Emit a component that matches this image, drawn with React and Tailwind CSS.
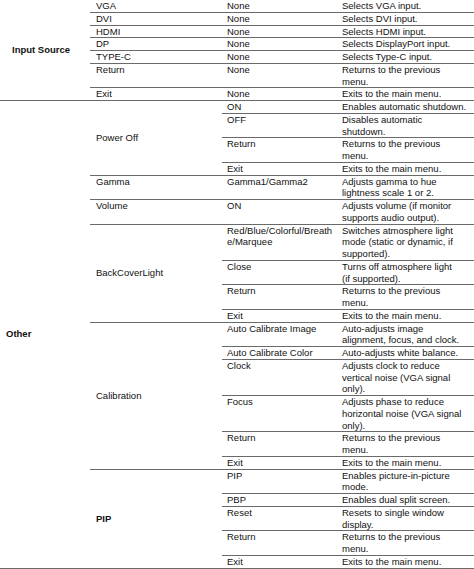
import * as React from "react"

const sections = [
	{
		name: "Input Source",
		pad: "pl-[12px]",
		groups: [
			{ item: "VGA", opts: [{ v: ["None"], d: ["Selects VGA input."] }] },
			{ item: "DVI", opts: [{ v: ["None"], d: ["Selects DVI input."] }] },
			{ item: "HDMI", opts: [{ v: ["None"], d: ["Selects HDMI input."] }] },
			{ item: "DP", opts: [{ v: ["None"], d: ["Selects DisplayPort input."] }] },
			{ item: "TYPE-C", opts: [{ v: ["None"], d: ["Selects Type-C input."] }] },
			{ item: "Return", opts: [{ v: ["None"], d: ["Returns to the previous", "menu."] }] },
			{ item: "Exit", opts: [{ v: ["None"], d: ["Exits to the main menu."] }] },
		],
	},
	{
		name: "Other",
		pad: "pl-[6px]",
		groups: [
			{
				item: "Power Off",
				opts: [
					{ v: ["ON"], d: ["Enables automatic shutdown."] },
					{ v: ["OFF"], d: ["Disables automatic", "shutdown."] },
					{ v: ["Return"], d: ["Returns to the previous", "menu."] },
					{ v: ["Exit"], d: ["Exits to the main menu."] },
				],
			},
			{ item: "Gamma", opts: [{ v: ["Gamma1/Gamma2"], d: ["Adjusts gamma to hue", "lightness scale 1 or 2."] }] },
			{ item: "Volume", opts: [{ v: ["ON"], d: ["Adjusts volume (if monitor", "supports audio output)."] }] },
			{
				item: "BackCoverLight",
				opts: [
					{ v: ["Red/Blue/Colorful/Breath", "e/Marquee"], d: ["Switches atmosphere light", "mode (static or dynamic, if", "supported)."] },
					{ v: ["Close"], d: ["Turns off atmosphere light", "(if supported)."] },
					{ v: ["Return"], d: ["Returns to the previous", "menu."] },
					{ v: ["Exit"], d: ["Exits to the main menu."] },
				],
			},
			{
				item: "Calibration",
				opts: [
					{ v: ["Auto Calibrate Image"], d: ["Auto-adjusts image", "alignment, focus, and clock."] },
					{ v: ["Auto Calibrate Color"], d: ["Auto-adjusts white balance."] },
					{ v: ["Clock"], d: ["Adjusts clock to reduce", "vertical noise (VGA signal", "only)."] },
					{ v: ["Focus"], d: ["Adjusts phase to reduce", "horizontal noise (VGA signal", "only)."] },
					{ v: ["Return"], d: ["Returns to the previous", "menu."] },
					{ v: ["Exit"], d: ["Exits to the main menu."] },
				],
			},
			{
				item: "PIP",
				bold: true,
				opts: [
					{ v: ["PIP"], d: ["Enables picture-in-picture", "mode."] },
					{ v: ["PBP"], d: ["Enables dual split screen."] },
					{ v: ["Reset"], d: ["Resets to single window", "display."] },
					{ v: ["Return"], d: ["Returns to the previous", "menu."] },
					{ v: ["Exit"], d: ["Exits to the main menu."] },
				],
			},
		],
	},
]

const Lines = ({ lines }) => lines.map((l, i) => <div key={i}>{l}</div>)

// every cell carries the rule under it; spanning cells draw it at the bottom of their span
const cell = "p-0 border-b border-[#6a6a6a] whitespace-nowrap"

const App = () => {
	const rows = []
	sections.forEach((s) => {
		const total = s.groups.reduce((n, g) => n + g.opts.length, 0)
		s.groups.forEach((g, gi) => {
			g.opts.forEach((o, oi) => {
				rows.push(
					<tr key={`${s.name}-${gi}-${oi}`}>
						{gi === 0 && oi === 0 && (
							<td rowSpan={total} className={`${cell} ${s.pad} align-middle font-bold`}>
								{s.name}
							</td>
						)}
						{oi === 0 && (
							<td
								rowSpan={g.opts.length}
								className={`${cell} pl-[6px] ${g.opts.length > 1 ? "align-middle" : "align-top"} ${g.bold ? "font-bold" : ""}`}
							>
								{g.item}
							</td>
						)}
						<td className={`${cell} pl-[5px] align-top`}>
							<Lines lines={o.v} />
						</td>
						<td className={`${cell} pl-[5px] align-top`}>
							<Lines lines={o.d} />
						</td>
					</tr>
				)
			})
		})
	})

	return (
		<div className="w-[474px] h-[569px] overflow-hidden bg-white font-['Liberation_Sans',Arial,sans-serif] text-[9.5px] leading-[11.75px] text-[#111] antialiased">
			<table className="w-[474px] table-fixed">
				<colgroup>
					<col className="w-[90px]" />
					<col className="w-[132px]" />
					<col className="w-[115px]" />
					<col className="w-[137px]" />
				</colgroup>
				<tbody>{rows}</tbody>
			</table>
		</div>
	)
}

export default App
